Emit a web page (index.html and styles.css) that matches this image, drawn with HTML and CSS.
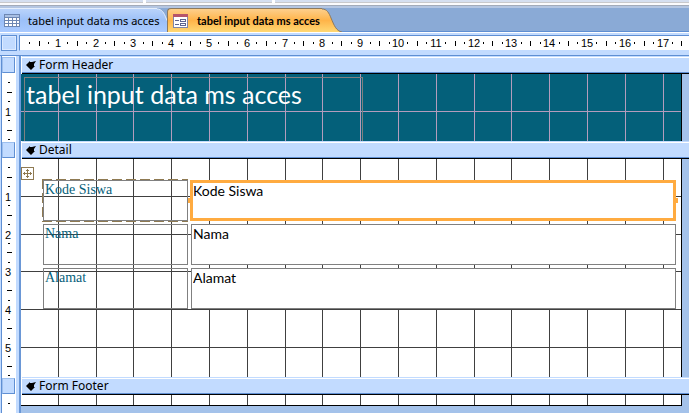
FILE: index.html
```html
<!DOCTYPE html>
<html lang="id">
<head>
  <meta charset="UTF-8">
  <meta name="viewport" content="width=device-width, initial-scale=1.0">
  <title>tabel input data ms acces</title>
  <link rel="stylesheet" href="styles.css">
</head>
<body>
  <div class="ribbon-edge"><span class="group"></span><span class="group"></span></div>

  <nav class="tabs">
    <a class="tab" href="#tabel">
      <span class="tab-face">
        <svg class="icon" width="16" height="14" viewBox="0 0 16 14" shape-rendering="crispEdges" aria-hidden="true">
          <rect width="16" height="13" fill="#6d87b3"/>
          <rect x="1" y="1" width="14" height="2" fill="#a9c0e4"/>
          <path d="M1 4h3v2H1zM5 4h3v2H5zM9 4h3v2H9zM13 4h2v2h-2zM1 7h3v2H1zM5 7h3v2H5zM9 7h3v2H9zM13 7h2v2h-2zM1 10h3v2H1zM5 10h3v2H5zM9 10h3v2H9zM13 10h2v2h-2z" fill="#fff"/>
        </svg>
        tabel input data ms acces
      </span>
      <svg class="slope" width="22" height="24" viewBox="0 0 22 24" aria-hidden="true">
        <defs>
          <linearGradient id="blue" x2="0" y2="1">
            <stop offset="0" stop-color="#b9d3fb"/>
            <stop offset="0.5" stop-color="#9cc0f8"/>
            <stop offset="1" stop-color="#a9caff"/>
          </linearGradient>
        </defs>
        <path d="M0 1C5 1 7 5 9 10C12 17 14 23 20 24H0z" fill="url(#blue)"/>
        <path d="M0 1C5 1 7 5 9 10C12 17 14 23 20 24" fill="none" stroke="#e4eefc"/>
      </svg>
    </a>
    <a class="tab active" href="#form">
      <span class="tab-face">
        <svg class="icon" width="16" height="14" viewBox="0 0 16 14" shape-rendering="crispEdges" aria-hidden="true">
          <rect width="15" height="14" fill="#7f86a8"/>
          <rect x="1" y="1" width="13" height="12" fill="#fff"/>
          <rect width="15" height="3" fill="#b5546b"/>
          <path d="M2 6h4v1H2zM2 10h4v1H2z" fill="#5d6590"/>
          <path d="M7 5h6v3H7zM7 9h6v3H7z" fill="#5d6590"/>
          <path d="M8 6h4v1H8zM8 10h4v1H8z" fill="#fff"/>
        </svg>
        tabel input data ms acces
      </span>
      <svg class="slope" width="22" height="24" viewBox="0 0 22 24" aria-hidden="true">
        <defs>
          <linearGradient id="orange" x2="0" y2="1">
            <stop offset="0" stop-color="#fdcf8c"/>
            <stop offset="0.5" stop-color="#ffb449"/>
            <stop offset="1" stop-color="#ffd874"/>
          </linearGradient>
        </defs>
        <path d="M0 1C5 1 7 5 9 10C12 17 14 23 20 24H0z" fill="url(#orange)"/>
        <path d="M0 1C5 1 7 5 9 10C12 17 14 23 20 24" fill="none" stroke="#8d7a5e"/>
      </svg>
    </a>
  </nav>

  <div class="ruler-row">
    <button class="corner" type="button" aria-label="Form"></button>
    <div class="ruler"><svg class="ruler-h" aria-hidden="true"></svg></div>
  </div>

  <main class="design">
    <section>
      <div class="bar-row">
        <div class="gutter"><button class="selector" type="button" aria-label="Form Header"></button></div>
        <h2 class="bar"><svg class="arrow" width="10" height="9" viewBox="0 0 10 9" aria-hidden="true"><path d="M0 4L4 0V1H6L10 0L8 3V5H9L5 9Z"/></svg>Form Header</h2>
      </div>
      <div class="area-row">
        <div class="gutter"><svg class="ruler-v" aria-hidden="true"></svg></div>
        <div class="area header-area">
          <svg class="grid" aria-hidden="true"></svg>
          <h1 class="title">tabel input data ms acces</h1>
        </div>
      </div>
    </section>

    <section>
      <div class="bar-row">
        <div class="gutter"><button class="selector" type="button" aria-label="Detail"></button></div>
        <h2 class="bar"><svg class="arrow" width="10" height="9" viewBox="0 0 10 9" aria-hidden="true"><path d="M0 4L4 0V1H6L10 0L8 3V5H9L5 9Z"/></svg>Detail</h2>
      </div>
      <div class="area-row">
        <div class="gutter"><svg class="ruler-v" aria-hidden="true"></svg></div>
        <div class="area detail-area">
          <svg class="grid" aria-hidden="true"></svg>
          <svg class="move" width="13" height="13" viewBox="0 0 13 13" aria-hidden="true">
            <rect x="0.5" y="0.5" width="12" height="12" fill="#fff" stroke="#8f7a52"/>
            <path d="M6.500 2V11M2 6.500H11M5 3.500H8M5 9.500H8M3.500 5V8M9.500 5V8" stroke="#8f7a52" fill="none"/>
          </svg>
          <form class="fields">
            <div class="field selected">
              <label for="kode">Kode Siswa</label>
              <input type="text" id="kode" value="Kode Siswa">
            </div>
            <div class="field">
              <label for="nama">Nama</label>
              <input type="text" id="nama" value="Nama">
            </div>
            <div class="field">
              <label for="alamat">Alamat</label>
              <input type="text" id="alamat" value="Alamat">
            </div>
          </form>
        </div>
      </div>
    </section>

    <section class="last">
      <div class="bar-row">
        <div class="gutter"><button class="selector" type="button" aria-label="Form Footer"></button></div>
        <h2 class="bar"><svg class="arrow" width="10" height="9" viewBox="0 0 10 9" aria-hidden="true"><path d="M0 4L4 0V1H6L10 0L8 3V5H9L5 9Z"/></svg>Form Footer</h2>
      </div>
      <div class="area-row">
        <div class="gutter"><svg class="ruler-v" aria-hidden="true"></svg></div>
        <div class="area footer-area">
          <svg class="grid" aria-hidden="true"></svg>
        </div>
      </div>
    </section>
  </main>

  <script src="script.js"></script>
</body>
</html>
```

FILE: styles.css
```css
* {
  box-sizing: border-box;
}
body {
  margin: 0;
  min-height: 100vh;
  display: flex;
  flex-direction: column;
  background: #c2dbff;
  color: #000;
  font-family: "Noto Sans", sans-serif;
  font-size: 12px;
  overflow: hidden;
}
h1, h2 {
  margin: 0;
  font-weight: normal;
}
button {
  padding: 0;
}
svg {
  flex-shrink: 0;
}

/* bottom edge of the ribbon */
.ribbon-edge {
  display: flex;
  height: 8px;
  background: linear-gradient(#d5dff0 2px, #c9c9cb 2px 3px, #fbfbfd 3px 5px, #a3abb9 5px 6px, #b4c6e2 6px);
}
.group {
  width: 146px;
  height: 3px;
  border-right: 3px solid #fff;
}
.group + .group {
  width: 129px;
}

/* document tabs */
.tabs {
  display: flex;
  height: 24px;
  background: #8aaad6;
  border-bottom: 1px solid #5f8fd3;
}
.tab {
  display: flex;
  height: 24px;
  color: #000;
  text-decoration: none;
  white-space: nowrap;
}
.tab-face {
  position: relative;
  z-index: 1;
  display: flex;
  align-items: center;
  gap: 8px;
  width: 157px;
  padding-left: 4px;
  background: linear-gradient(#b9d3fb, #9cc0f8 50%, #a9caff);
  border-top: 1px solid #e4eefc;
  font-size: 11px;
}
.slope {
  display: block;
  margin-right: -12px;
}
.active {
  position: relative;
  z-index: 2;
  font-family: Lato, sans-serif;
  font-weight: bold;
}
.active .tab-face {
  width: 155px;
  padding-left: 5px;
  background: linear-gradient(#fdcf8c, #ffb449 50%, #ffd874);
  border-top-color: #8d7a5e;
  border-left: 1px solid #8d7a5e;
  border-top-left-radius: 4px;
}

/* horizontal ruler */
.ruler-row {
  display: flex;
  height: 24px;
  padding-top: 2px;
  border-top: 1px solid #fff;
  border-bottom: 2px solid #c2dbff;
}
.corner {
  width: 16px;
  height: 16px;
  margin: 0 2px 0 1px;
  background: #c2dbff;
  border: 1px solid #5f8fd3;
  box-shadow: inset 0 0 0 1px #dceaff;
}
.ruler {
  flex: 1;
  height: 16px;
  background: #fff;
  border: solid #5f8fd3;
  border-width: 1px 0 0 1px;
  border-bottom: 1px solid #c2dbff;
  padding-left: 1px;
}
.ruler-h {
  display: block;
  width: 100%;
  height: 14px;
}
svg text {
  font-family: "Liberation Sans", sans-serif;
  font-size: 11px;
  text-anchor: middle;
}

/* sections */
.design {
  flex: 1;
  display: flex;
  flex-direction: column;
  background: #a4c2ea;
  border-top: 1px solid #5f8fd3;
  margin-top: -1px;
}
.bar-row, .area-row {
  display: grid;
  grid-template-columns: 21px 1fr;
}
.last {
  flex: 1;
  display: flex;
  flex-direction: column;
}
.last .area-row {
  flex: 1;
}
.gutter {
  position: relative;
  overflow: hidden;
  padding: 1px 5px 1px 2px;
  background: linear-gradient(to right, #c2dbff 1px, #5f8fd3 1px 2px, #fff 2px 16px, #c2dbff 16px 19px, #6a97d6 19px);
}
.selector {
  display: block;
  width: 13px;
  height: 16px;
  background: #c2dbff;
  border: 1px solid #9dbfee;
  border-right-color: #5f8fd3;
  border-bottom-color: #5f8fd3;
}
.ruler-v {
  position: absolute;
  top: 0;
  left: 2px;
  width: 14px;
  height: 100%;
}
.bar {
  display: flex;
  align-items: center;
  gap: 3px;
  height: 18px;
  padding-left: 4px;
  border-left: 1px solid #fff;
  background: linear-gradient(#c2dbff 1px, #fff 1px 2px, #c2dbff 2px 16px, #5f8fd3 16px 17px, #000 17px);
  font-size: 12px;
  line-height: 18px;
}
.area {
  position: relative;
  margin-right: 7px;
  background: #fff;
  border-right: 1px solid #000;
  color: #404040;
}
.grid {
  position: absolute;
  top: 0;
  left: 0;
  width: 100%;
  height: 100%;
}
.header-area {
  height: 67px;
  padding: 3px;
  background: #04607a;
  color: #b49cbc;
}
.detail-area {
  min-height: 218px;
  padding-top: 8px;
}
.footer-area {
  height: 11px;
  border-bottom: 1px solid #000;
}
.title {
  position: relative;
  width: 339px;
  height: 64px;
  padding-left: 1px;
  border: 1px solid #808080;
  border-bottom: 0;
  color: #fff;
  font-family: Lato, sans-serif;
  font-size: 25px;
  line-height: 32px;
}
.move {
  position: relative;
  display: block;
}

/* bound controls */
.fields {
  position: relative;
  display: flex;
  flex-direction: column;
  gap: 3px;
  padding: 0 5px 0 22px;
}
.field {
  position: relative;
  display: grid;
  grid-template-columns: 145px 1fr;
  gap: 3px;
}
.field label {
  position: relative;
  height: 41px;
  padding-left: 1px;
  border: 1px solid #808080;
  color: #04607a;
  font-family: "Liberation Serif", serif;
  font-size: 14px;
  line-height: 17px;
}
.field input {
  width: 100%;
  height: 41px;
  margin: 0;
  padding: 0 1px 22px;
  background: #fff;
  border: 1px solid #808080;
  border-radius: 0;
  color: #000;
  font-family: Lato, sans-serif;
  font-size: 14px;
}
.selected {
  gap: 2px;
}
.selected input {
  padding: 0 0 20px;
  border: 3px solid #ffab40;
}
/* dashed frame round the label of the selected control */
.selected label::before {
  content: "";
  position: absolute;
  inset: -2px -1px -2px -2px;
  background:
    repeating-linear-gradient(to right, #8f7a52 0 10px, transparent 10px 14px) top / 100% 1px no-repeat,
    repeating-linear-gradient(to right, #8f7a52 0 10px, transparent 10px 14px) bottom / 100% 1px no-repeat,
    repeating-linear-gradient(to bottom, #8f7a52 0 10px, transparent 10px 14px) left / 1px 100% no-repeat;
}
.selected::before, .selected::after {
  content: "";
  position: absolute;
  top: 18px;
  width: 3px;
  height: 5px;
  background: #ffab40;
}
.selected::before {
  left: 144px;
}
.selected::after {
  right: -2px;
}
```

FILE: script.js
```javascript
const SVG_NS = "http://www.w3.org/2000/svg";
const CM = 96 / 2.54;

function pos(cm) {
  return Math.round(cm * CM) - 1;
}

function addRect(svg, x, y, width, height) {
  const rect = document.createElementNS(SVG_NS, "rect");
  rect.setAttribute("x", x);
  rect.setAttribute("y", y);
  rect.setAttribute("width", width);
  rect.setAttribute("height", height);
  rect.setAttribute("fill", "currentColor");
  svg.appendChild(rect);
}

function addNumber(svg, x, y, value) {
  const text = document.createElementNS(SVG_NS, "text");
  text.setAttribute("x", x);
  text.setAttribute("y", y);
  text.textContent = value;
  svg.appendChild(text);
}

// Number on every centimetre, bar on the half, dots on the quarters
function drawRuler(svg, vertical) {
  const box = svg.getBoundingClientRect();
  const length = vertical ? box.height : box.width;
  for (let i = 1; pos(i / 4) < length; i++) {
    const p = pos(i / 4);
    if (i % 4 === 0) {
      if (p + 7 > length) continue;
      if (vertical) addNumber(svg, 6, p + 5, i / 4);
      else addNumber(svg, p, 11, i / 4);
    } else {
      const size = i % 2 === 0 ? 5 : 2;
      const start = i % 2 === 0 ? 5 : 6;
      if (vertical) addRect(svg, start, p, size, 1);
      else addRect(svg, p, start, 1, size);
    }
  }
}

// Lines of the design grid, one per centimetre
function drawGrid(svg) {
  const box = svg.getBoundingClientRect();
  for (let i = 1; pos(i) < box.width; i++) {
    addRect(svg, pos(i), 0, 1, "100%");
  }
  for (let i = 1; pos(i) < box.height; i++) {
    addRect(svg, 0, pos(i), "100%", 1);
  }
}

document.querySelectorAll(".ruler-h").forEach(svg => drawRuler(svg, false));
document.querySelectorAll(".ruler-v").forEach(svg => drawRuler(svg, true));
document.querySelectorAll(".grid").forEach(drawGrid);
```
